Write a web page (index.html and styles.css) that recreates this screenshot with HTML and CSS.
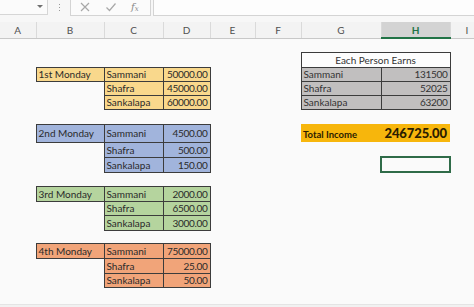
FILE: index.html
```html
<!DOCTYPE html>
<html>
<head>
<meta charset="utf-8">
<link rel="stylesheet" href="styles.css">
</head>
<body>
<div class="app">
  <div class="toolbar">
    <div class="namebox"><span class="caret"></span></div>
    <div class="grip"><i></i><i></i><i></i></div>
    <div class="fbtns">
      <svg class="ico" width="12" height="12" viewBox="0 0 12 12"><path d="M2 2 L10 10 M10 2 L2 10" stroke="#a8a8a8" stroke-width="1.2" fill="none"/></svg>
      <svg class="ico" width="12" height="12" viewBox="0 0 12 12"><path d="M1.5 6.5 L4.5 9.5 L10.5 2.5" stroke="#a8a8a8" stroke-width="1.2" fill="none"/></svg>
      <span class="fx">f<sub>x</sub></span>
    </div>
    <div class="finput"></div>
  </div>
  <table class="sheet">
    <colgroup>
      <col class="c-a"><col class="c-b"><col class="c-c"><col class="c-d"><col class="c-e"><col class="c-f"><col class="c-g"><col class="c-h"><col class="c-i">
    </colgroup>
    <thead>
      <tr class="hdr">
        <th>A</th><th>B</th><th>C</th><th>D</th><th>E</th><th>F</th><th>G</th><th class="sel">H</th><th class="last">I</th>
      </tr>
    </thead>
    <tbody>
      <tr class="h14"><td></td><td></td><td></td><td></td><td></td><td></td><td></td><td></td><td></td></tr>
      <tr class="h15"><td></td><td></td><td></td><td></td><td></td><td></td><td colspan="2" class="ep-head">Each Person Earns</td><td></td></tr>
      <tr class="h14"><td></td><td class="y b">1st Monday</td><td class="y b">Sammani</td><td class="y b num">50000.00</td><td></td><td></td><td class="g b">Sammani</td><td class="g b num">131500</td><td></td></tr>
      <tr class="h14"><td></td><td></td><td class="y b">Shafra</td><td class="y b num">45000.00</td><td></td><td></td><td class="g b">Shafra</td><td class="g b num">52025</td><td></td></tr>
      <tr class="h14"><td></td><td></td><td class="y b">Sankalapa</td><td class="y b num">60000.00</td><td></td><td></td><td class="g b">Sankalapa</td><td class="g b num">63200</td><td></td></tr>
      <tr class="h15"><td></td><td></td><td></td><td></td><td></td><td></td><td></td><td></td><td></td></tr>
      <tr class="h18"><td></td><td class="bl b">2nd Monday</td><td class="bl b">Sammani</td><td class="bl b num">4500.00</td><td></td><td></td><td class="tot tot-l">Total Income</td><td class="tot tot-v num">246725.00</td><td></td></tr>
      <tr class="h15"><td></td><td></td><td class="bl b">Shafra</td><td class="bl b num">500.00</td><td></td><td></td><td></td><td></td><td></td></tr>
      <tr class="h15"><td></td><td></td><td class="bl b">Sankalapa</td><td class="bl b num">150.00</td><td></td><td></td><td></td><td class="active"><span class="handle"></span></td><td></td></tr>
      <tr class="h14"><td></td><td></td><td></td><td></td><td></td><td></td><td></td><td></td><td></td></tr>
      <tr class="h15"><td></td><td class="gr b">3rd Monday</td><td class="gr b">Sammani</td><td class="gr b num">2000.00</td><td></td><td></td><td></td><td></td><td></td></tr>
      <tr class="h14"><td></td><td></td><td class="gr b">Shafra</td><td class="gr b num">6500.00</td><td></td><td></td><td></td><td></td><td></td></tr>
      <tr class="h15"><td></td><td></td><td class="gr b">Sankalapa</td><td class="gr b num">3000.00</td><td></td><td></td><td></td><td></td><td></td></tr>
      <tr class="h13"><td></td><td></td><td></td><td></td><td></td><td></td><td></td><td></td><td></td></tr>
      <tr class="h15"><td></td><td class="or b">4th Monday</td><td class="or b">Sammani</td><td class="or b num">75000.00</td><td></td><td></td><td></td><td></td><td></td></tr>
      <tr class="h15"><td></td><td></td><td class="or b">Shafra</td><td class="or b num">25.00</td><td></td><td></td><td></td><td></td><td></td></tr>
      <tr class="h14"><td></td><td></td><td class="or b">Sankalapa</td><td class="or b num">50.00</td><td></td><td></td><td></td><td></td><td></td></tr>
      <tr class="h15"><td></td><td></td><td></td><td></td><td></td><td></td><td></td><td></td><td></td></tr>
    </tbody>
  </table>
  <div class="tabs"></div>
</div>
</body>
</html>
```

FILE: styles.css
```css
* { box-sizing: border-box; }
html, body { margin: 0; padding: 0; }
body {
  width: 474px;
  height: 307px;
  overflow: hidden;
  background: #fafafa;
  font-family: Lato, "Open Sans", sans-serif;
  color: #2a2a2a;
}
.app { width: 474px; height: 307px; display: flex; flex-direction: column; }

.toolbar {
  height: 22px;
  display: flex;
  align-items: flex-start;
  background: #f7f7f7;
  flex: none;
}
.namebox {
  width: 48px;
  height: 16px;
  margin-top: -1px;
  border-right: 1px solid #d6d6d6;
  border-bottom: 1px solid #d6d6d6;
  background: #fbfbfb;
  display: flex;
  align-items: center;
  justify-content: flex-end;
  padding-right: 4px;
}
.caret {
  width: 0; height: 0;
  border-left: 3px solid transparent;
  border-right: 3px solid transparent;
  border-top: 3px solid #707070;
  margin-top: -1px;
}
.grip {
  width: 22px;
  height: 14px;
  display: flex;
  flex-direction: column;
  align-items: center;
  justify-content: center;
  gap: 2px;
}
.grip i { display: block; width: 1px; height: 1px; background: #999; }
.fbtns {
  width: 81px;
  height: 17px;
  margin-top: -1px;
  border: 1px solid #d4d4d4;
  border-top: none;
  background: #fbfbfb;
  display: flex;
  align-items: center;
  padding-left: 8px;
  gap: 14px;
}
.fbtns .ico { flex: none; }
.fx {
  font-family: "DejaVu Serif", "Liberation Serif", serif;
  font-style: italic;
  font-size: 10px;
  color: #8a8a8a;
}
.fx sub { font-size: 7px; vertical-align: -1px; }
.finput {
  flex: 1;
  height: 17px;
  margin-top: -1px;
  margin-left: 2px;
  border: 1px solid #d4d4d4;
  border-top: none;
  border-right: none;
  background: #fdfdfd;
}

.sheet {
  width: 474px;
  table-layout: fixed;
  border-collapse: collapse;
  flex: none;
  font-size: 10px;
}
.c-a { width: 36px; }
.c-b { width: 68px; }
.c-c { width: 59px; }
.c-d { width: 47px; }
.c-e { width: 45px; }
.c-f { width: 46px; }
.c-g { width: 80px; }
.c-h { width: 69px; }
.c-i { width: 24px; }

.hdr th {
  height: 16px;
  padding: 0;
  font-weight: normal;
  font-size: 10px;
  color: #505050;
  background: #f3f3f3;
  border-right: 1px solid #dadada;
  border-bottom: 1px solid #c8c8c8;
  text-align: center;
  vertical-align: middle;
}
.hdr th.sel {
  background: #d3d3d3;
  color: #217346;
  font-weight: bold;
  border-bottom: 2px solid #217346;
}
.hdr th.last { border-right: none; text-align: left; padding-left: 15px; }

td {
  padding: 0 2px;
  white-space: nowrap;
  overflow: hidden;
  vertical-align: middle;
  line-height: 1;
}
.h13 { height: 13px; }
.h14 { height: 14px; }
.h15 { height: 15px; }
.h18 { height: 18px; }

.b { border: 1px solid #3c3c3c; }
.num { text-align: right; letter-spacing: -0.3px; }
.y { background: #f9d88c; }
.bl { background: #a1b4dc; }
.gr { background: #b5d49e; }
.or { background: #f1a479; }
.g { background: #c1bfbf; color: #333; }

.ep-head {
  background: #fdfdfd;
  border: 1px solid #3c3c3c;
  text-align: center;
  color: #333;
}

.tot { background: #f7b60c; color: #2b1d00; }
.tot-l { font-weight: bold; font-size: 9.5px; padding-top: 4px; }
.tot-v { font-weight: 900; font-size: 13px; padding-right: 3px; padding-top: 1px; letter-spacing: -0.1px; overflow: visible; }

.active {
  position: relative;
  border: 2px solid #2f6b48;
}
.handle {
  position: absolute;
  right: -3px;
  bottom: -3px;
  width: 4px;
  height: 4px;
  background: #2f6b48;
  border: 1px solid #fafafa;
}

.tabs {
  flex: 1;
  margin-top: 2px;
  border-top: 1px solid #e4e4e4;
  background: #f1f1f1;
}
```
